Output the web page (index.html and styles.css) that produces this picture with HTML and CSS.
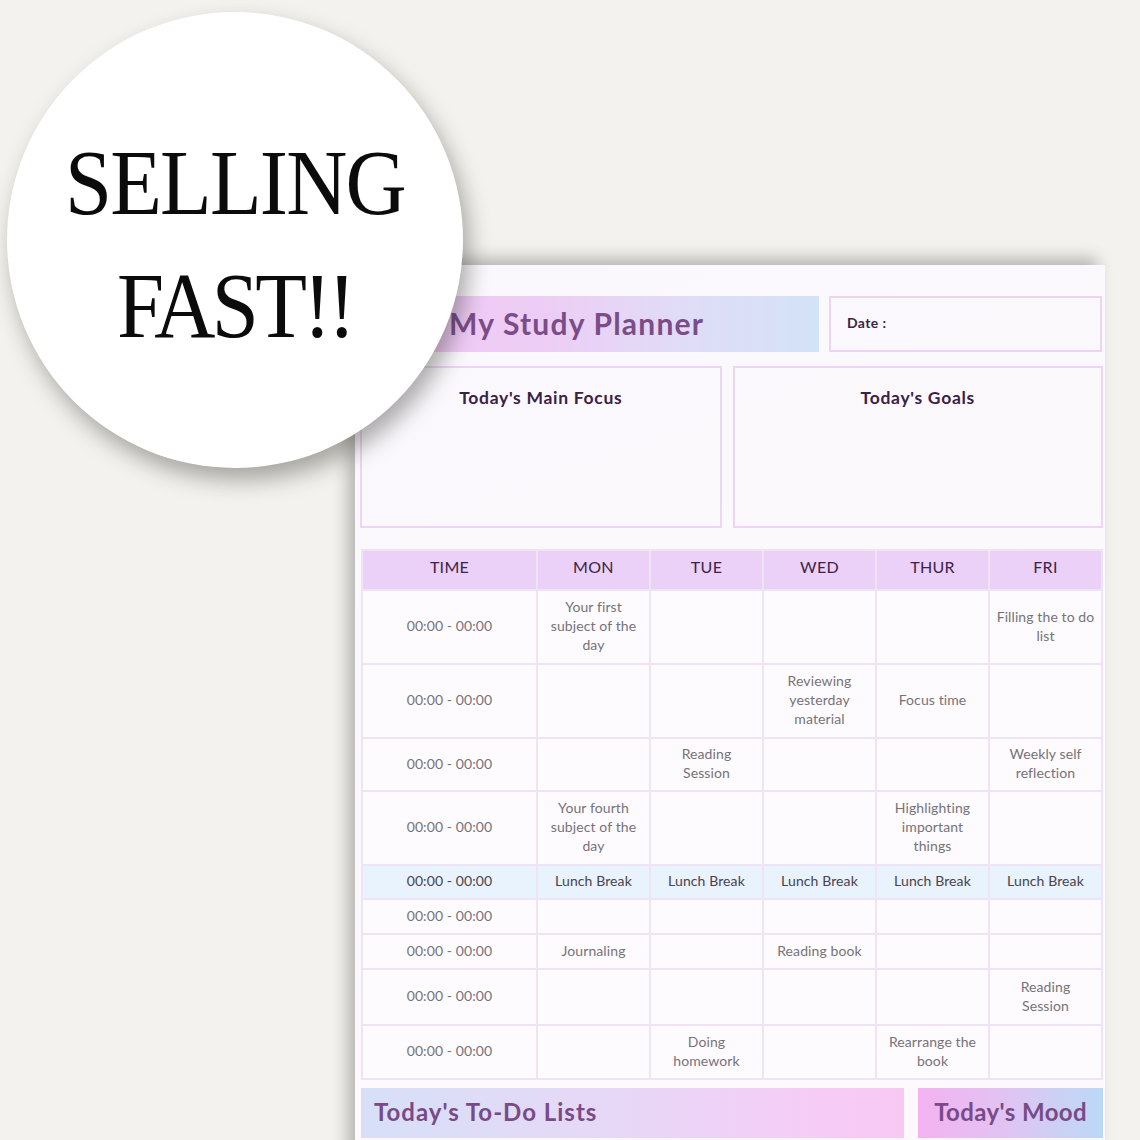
FILE: index.html
```html
<!DOCTYPE html>
<html lang="en">
<head>
<meta charset="utf-8">
<title>My Study Planner</title>
<link rel="stylesheet" href="styles.css">
</head>
<body>
<div class="stage">
  <div class="badge">
    <div class="badge-line l1">SELLING</div>
    <div class="badge-line l2">FAST!!</div>
  </div>

  <div class="paper">
    <div class="top-row">
      <div class="title-bar"><span class="title">My Study Planner</span></div>
      <div class="date-box"><span class="date-label">Date :</span></div>
    </div>

    <div class="focus-row">
      <div class="box main-focus"><h2 class="box-title">Today's Main Focus</h2></div>
      <div class="box goals"><h2 class="box-title">Today's Goals</h2></div>
    </div>

    <div class="schedule">
      <div class="cell head">TIME</div>
      <div class="cell head">MON</div>
      <div class="cell head">TUE</div>
      <div class="cell head">WED</div>
      <div class="cell head">THUR</div>
      <div class="cell head">FRI</div>

      <div class="cell time">00:00 - 00:00</div>
      <div class="cell">Your first subject of the day</div>
      <div class="cell"></div>
      <div class="cell"></div>
      <div class="cell"></div>
      <div class="cell">Filling the to do list</div>

      <div class="cell time">00:00 - 00:00</div>
      <div class="cell"></div>
      <div class="cell"></div>
      <div class="cell">Reviewing yesterday material</div>
      <div class="cell">Focus time</div>
      <div class="cell"></div>

      <div class="cell time">00:00 - 00:00</div>
      <div class="cell"></div>
      <div class="cell">Reading<br>Session</div>
      <div class="cell"></div>
      <div class="cell"></div>
      <div class="cell">Weekly self reflection</div>

      <div class="cell time">00:00 - 00:00</div>
      <div class="cell">Your fourth subject of the day</div>
      <div class="cell"></div>
      <div class="cell"></div>
      <div class="cell">Highlighting important things</div>
      <div class="cell"></div>

      <div class="cell time lunch">00:00 - 00:00</div>
      <div class="cell lunch">Lunch Break</div>
      <div class="cell lunch">Lunch Break</div>
      <div class="cell lunch">Lunch Break</div>
      <div class="cell lunch">Lunch Break</div>
      <div class="cell lunch">Lunch Break</div>

      <div class="cell time">00:00 - 00:00</div>
      <div class="cell"></div>
      <div class="cell"></div>
      <div class="cell"></div>
      <div class="cell"></div>
      <div class="cell"></div>

      <div class="cell time">00:00 - 00:00</div>
      <div class="cell">Journaling</div>
      <div class="cell"></div>
      <div class="cell">Reading book</div>
      <div class="cell"></div>
      <div class="cell"></div>

      <div class="cell time">00:00 - 00:00</div>
      <div class="cell"></div>
      <div class="cell"></div>
      <div class="cell"></div>
      <div class="cell"></div>
      <div class="cell">Reading<br>Session</div>

      <div class="cell time">00:00 - 00:00</div>
      <div class="cell"></div>
      <div class="cell">Doing<br>homework</div>
      <div class="cell"></div>
      <div class="cell">Rearrange the book</div>
      <div class="cell"></div>
    </div>

    <div class="bottom-row">
      <div class="todo-bar"><span class="section-title">Today's To-Do Lists</span></div>
      <div class="mood-bar"><span class="section-title mood-title">Today's Mood</span></div>
    </div>
  </div>
</div>
</body>
</html>
```

FILE: styles.css
```css
html, body {
  margin: 0;
  padding: 0;
  width: 1140px;
  height: 1140px;
  overflow: hidden;
  background: #f3f2ee;
}

.stage {
  position: relative;
  width: 1140px;
  height: 1140px;
  padding-top: 265px;
  padding-left: 355px;
  box-sizing: border-box;
}

/* ---------- badge ---------- */
.badge {
  position: absolute;
  left: 7px;
  top: 12px;
  width: 456px;
  height: 456px;
  border-radius: 50%;
  background: #ffffff;
  box-shadow: 6px 12px 22px rgba(40, 40, 35, 0.38);
  z-index: 2;
  display: flex;
  flex-direction: column;
  align-items: center;
  justify-content: center;
  padding-top: 8px;
  box-sizing: border-box;
  font-family: "Liberation Serif", "Times New Roman", serif;
  color: #0b0b0b;
}

.badge-line {
  font-size: 94px;
  line-height: 123px;
  white-space: nowrap;
  transform: scaleX(0.9);
}

.l1 { letter-spacing: -2px; }
.l2 { letter-spacing: -4px; }

/* ---------- paper ---------- */
.paper {
  width: 750px;
  height: 900px;
  background: linear-gradient(160deg, #fbf8fd 0%, #fcf9fd 50%, #fdf8fb 100%);
  box-shadow: -8px -7px 14px rgba(60, 60, 55, 0.32);
  padding: 31px 2px 0 6px;
  box-sizing: border-box;
  font-family: "Lato", "Open Sans", sans-serif;
}

.top-row {
  display: flex;
  gap: 10px;
  height: 56px;
}

.title-bar {
  width: 458px;
  background: linear-gradient(90deg, #f0c9f4 0%, #edcdf5 40%, #e0dcf7 70%, #d3e2f7 100%);
  display: flex;
  align-items: center;
  padding-left: 88px;
  padding-bottom: 2px;
  box-sizing: border-box;
}

.title {
  font-size: 30px;
  font-weight: 700;
  color: #7b4c88;
  letter-spacing: 1.2px;
}

.date-box {
  width: 273px;
  border: 2px solid #ecd4f2;
  box-sizing: border-box;
  display: flex;
  align-items: center;
  padding-left: 16px;
  padding-bottom: 3px;
}

.date-label {
  font-size: 14px;
  font-weight: 700;
  color: #3a2544;
  letter-spacing: 0.4px;
}

.focus-row {
  display: flex;
  gap: 11px;
  margin-top: 14px;
  margin-left: -1px;
  height: 162px;
}

.box {
  border: 2px solid #ecd6f3;
  box-sizing: border-box;
}

.main-focus { width: 362px; }
.goals { width: 371px; }

.box-title {
  margin: 19px 0 0;
  text-align: center;
  font-size: 17.5px;
  font-weight: 700;
  color: #3a2146;
  letter-spacing: 0.7px;
}

/* ---------- schedule ---------- */
.schedule {
  margin-top: 21px;
  width: 742px;
  display: grid;
  grid-template-columns: 173px repeat(5, 1fr);
  grid-template-rows: 38px 72px 72px 51px 72px 32px 33px 33px 54px 52px;
  gap: 2px;
  padding: 2px;
  box-sizing: border-box;
  background: #efe3f6;
}

.cell {
  background: #fdfbfd;
  display: flex;
  align-items: center;
  justify-content: center;
  text-align: center;
  padding: 0 5px 3px;
  font-size: 14px;
  font-weight: 400;
  line-height: 19px;
  color: #77727a;
  letter-spacing: 0.1px;
}

.cell.head {
  background: #ebd0f7;
  font-size: 16px;
  font-weight: 400;
  color: #3b2347;
  padding-bottom: 7px;
  letter-spacing: 0.3px;
}

.cell.lunch {
  background: #e8f3fd;
  color: #4a4250;
  padding-bottom: 4px;
}

/* ---------- bottom ---------- */
.bottom-row {
  display: flex;
  gap: 14px;
  margin-top: 8px;
  height: 50px;
}

.todo-bar {
  width: 544px;
  background: linear-gradient(90deg, #d7e0f8 0%, #e6d8f7 45%, #f4cdf6 80%, #f8c8f4 100%);
  display: flex;
  align-items: center;
  padding-left: 13px;
  padding-bottom: 4px;
  box-sizing: border-box;
}

.mood-bar {
  width: 185px;
  background: linear-gradient(90deg, #f4b2f1 0%, #e2c2f3 45%, #c9d2f6 80%, #bcd8f7 100%);
  display: flex;
  align-items: center;
  justify-content: center;
  padding-bottom: 4px;
  box-sizing: border-box;
}

.section-title {
  font-size: 24px;
  font-weight: 700;
  color: #7a4a87;
  letter-spacing: 1px;
}

.mood-title {
  letter-spacing: 0.4px;
}
```
